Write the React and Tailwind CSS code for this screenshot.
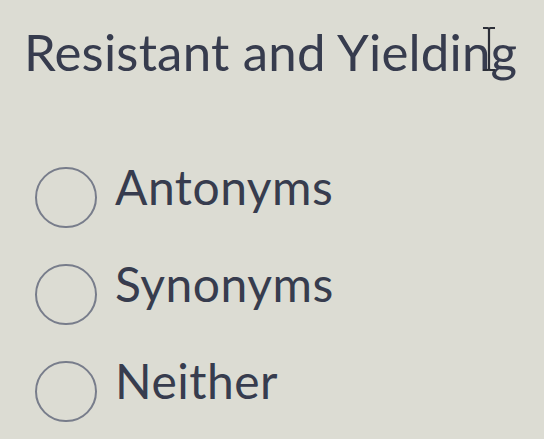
import React from "react";

const Option = ({ label }) => (
  <div className="flex items-center gap-[18px] h-[62px]">
    <span className="w-[62px] h-[61px] rounded-full border-2 border-[#787d8b] shrink-0" />
    <span className="text-[48px] leading-none tracking-[0.5px] text-[#373c4e] -mt-[20px]">{label}</span>
  </div>
);

export default function App() {
  return (
    <div
      className="w-[544px] h-[439px] overflow-hidden bg-[#dcdcd3] relative"
      style={{ fontFamily: "Lato, 'Open Sans', sans-serif" }}
    >
      <h1 className="pl-[24px] pt-[20px] text-[51px] leading-[64px] font-normal text-[#373c4e] tracking-[0.2px]">
        Resistant and Yielding
      </h1>

      {/* text cursor */}
      <svg className="absolute left-[480px] top-[26px]" width="18" height="46" viewBox="0 0 18 46">
        <path d="M3 2h4.5M10.5 2h4.5M9 4v38M3 44h4.5M10.5 44h4.5M7.5 2q1.5 0 1.5 2M10.5 2q-1.5 0-1.5 2M7.5 44q1.5 0 1.5-2M10.5 44q-1.5 0-1.5-2" stroke="#2c2f38" strokeWidth="2.2" fill="none" />
      </svg>

      <div className="flex flex-col gap-[35px] pl-[35px] pt-[82px]">
        <Option label="Antonyms" />
        <Option label="Synonyms" />
        <Option label="Neither" />
      </div>
    </div>
  );
}
